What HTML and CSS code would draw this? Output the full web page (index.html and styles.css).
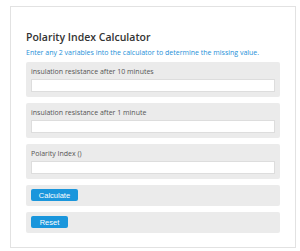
FILE: index.html
```html
<!DOCTYPE html>
<html lang="en">
<head>
  <meta charset="UTF-8" />
  <title>Polarity Index Calculator</title>
  <link rel="stylesheet" href="styles.css">
</head>
<body>
  <div class="calc-card">
    <h2 class="calc-title">Polarity Index Calculator</h2>
    <p class="calc-intro">Enter any 2 variables into the calculator to determine the missing value.</p>

    <div class="field-box">
      <label for="ir10">insulation resistance after 10 minutes</label>
      <input type="text" id="ir10">
    </div>
    <div class="field-box">
      <label for="ir1">insulation resistance after 1 minute</label>
      <input type="text" id="ir1">
    </div>
    <div class="field-box">
      <label for="pi">Polarity Index ()</label>
      <input type="text" id="pi">
    </div>
    <div class="field-box btn-box">
      <button class="calc-btn">Calculate</button>
    </div>
    <div class="field-box btn-box">
      <button class="calc-btn reset-btn">Reset</button>
    </div>
  </div>
</body>
</html>
```

FILE: styles.css
```css
body {
  margin: 0;
  padding: 6px 4px 3px 10px;
  background: #fff;
  font-family: 'Open Sans', sans-serif;
}

.calc-card {
  border: 1px solid #e2e2e2;
  padding: 23px 15px 16px 15px;
  box-sizing: border-box;
  height: 242px;
}

.calc-title {
  margin: 0;
  font-size: 10.5px;
  font-weight: 600;
  color: #333;
  line-height: 14px;
}

.calc-intro {
  margin: 4px 0 4px 0;
  font-size: 7px;
  line-height: 10px;
  color: #1e90d8;
}

.field-box {
  background: #ebebeb;
  border-radius: 2px;
  padding: 4px 5px 5px 5px;
  margin-bottom: 6px;
}

.field-box label {
  display: block;
  font-size: 7px;
  line-height: 12px;
  color: #555;
  margin-bottom: 1px;
}

.field-box input {
  display: block;
  width: 100%;
  box-sizing: border-box;
  height: 13px;
  border: 1px solid #ddd;
  background: #fff;
  padding: 0;
}

.btn-box {
  padding: 4px 5px 5px 5px;
}

.calc-btn {
  display: block;
  background: #1a96dc;
  color: #fff;
  border: none;
  border-radius: 2px;
  font-family: 'Liberation Sans', Arial, sans-serif;
  font-size: 7.5px;
  height: 12px;
  width: 47px;
  padding: 0;
}

.reset-btn {
  width: 37px;
}
```
